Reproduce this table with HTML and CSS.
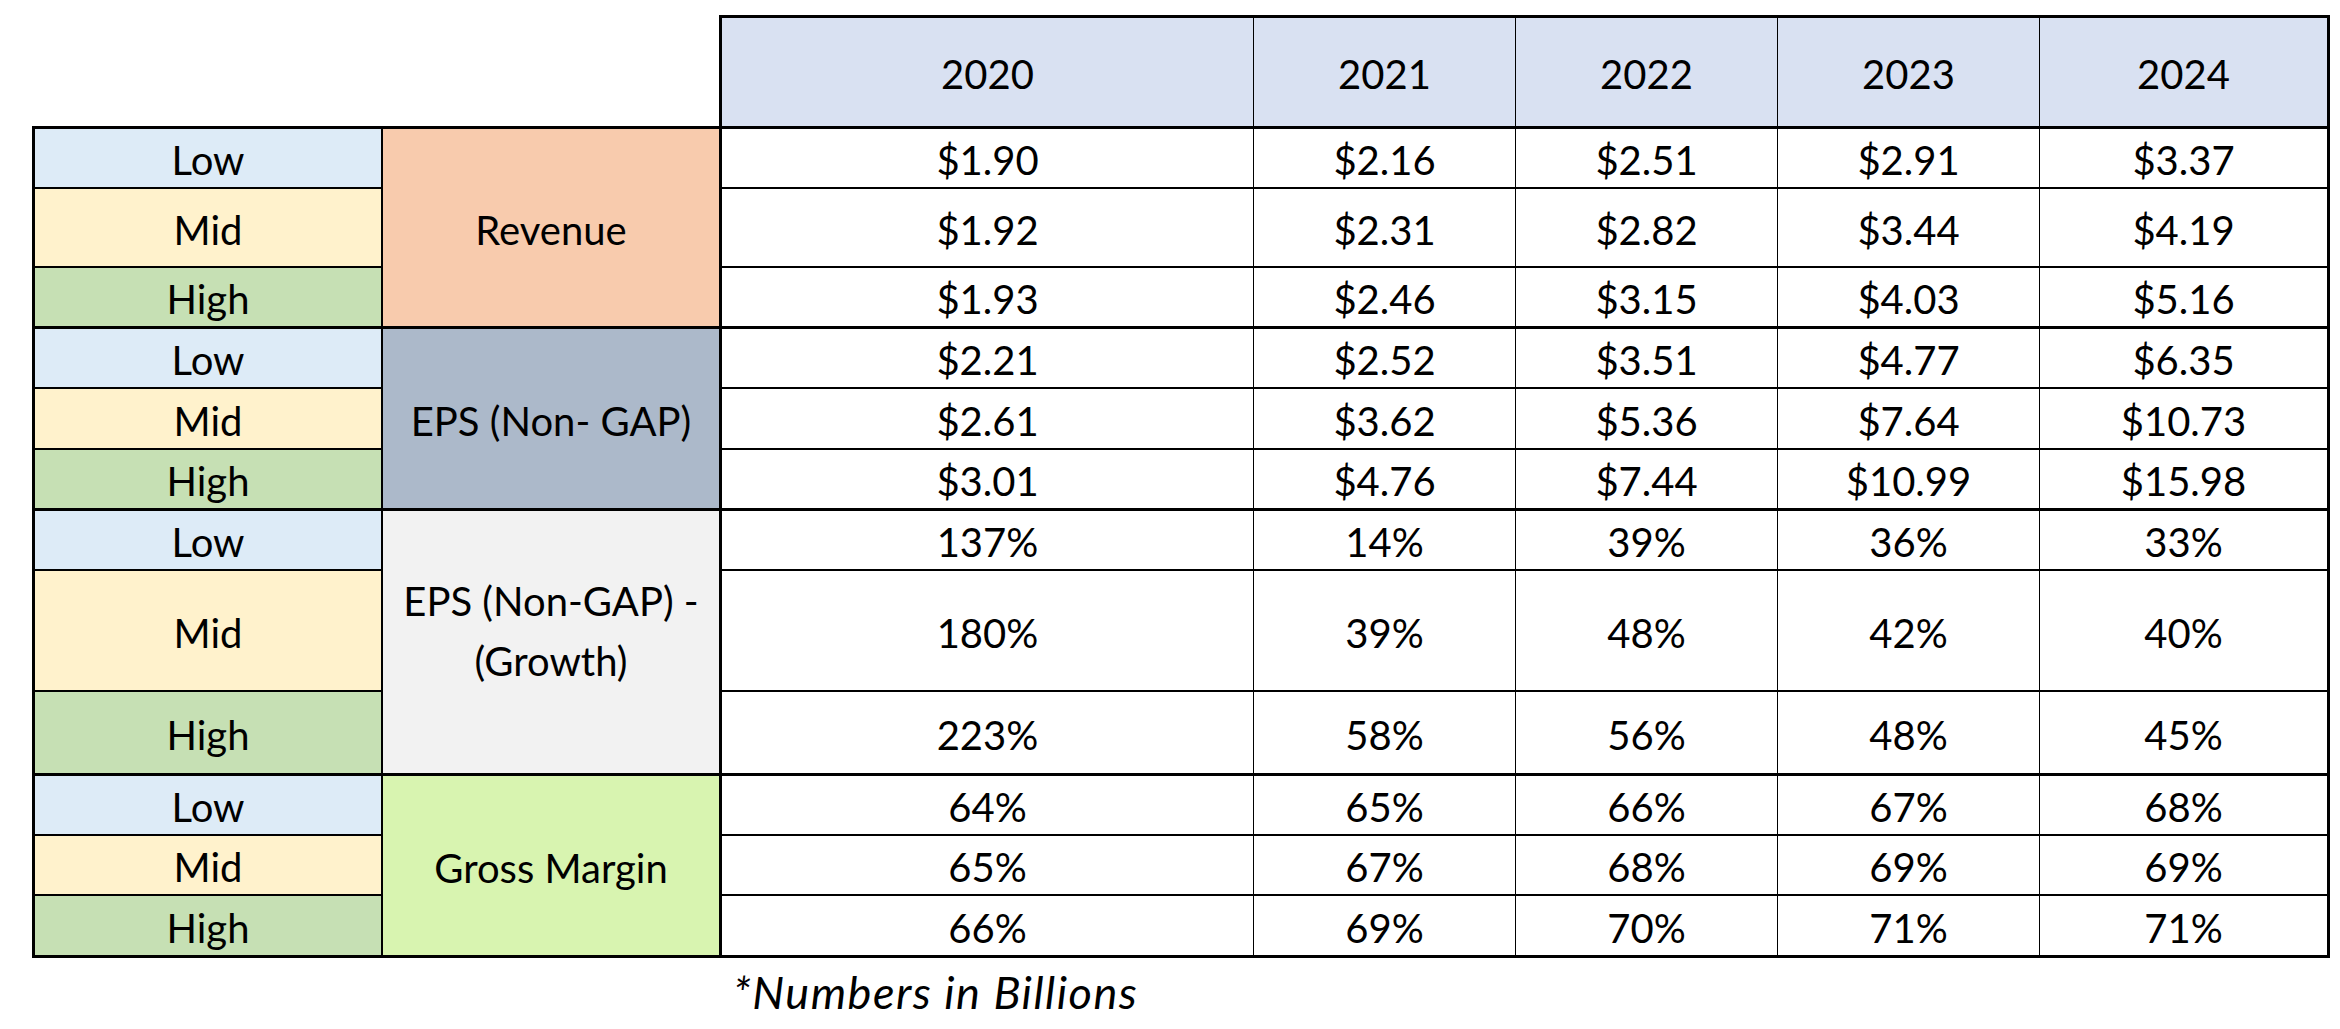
FILE: index.html
```html
<!DOCTYPE html>
<html lang="en">
<head>
<meta charset="utf-8">
<title>Projections</title>
<link rel="stylesheet" href="styles.css">
</head>
<body>
<div class="page">
  <div class="sheet">
    <div class="corner"></div>
    <div class="hd">2020</div><div class="hd">2021</div><div class="hd">2022</div><div class="hd">2023</div><div class="hd last">2024</div>

    <div class="lbl low">Low</div>
    <div class="cat rev">Revenue</div>
    <div class="v">$1.90</div><div class="v">$2.16</div><div class="v">$2.51</div><div class="v">$2.91</div><div class="v last">$3.37</div>
    <div class="lbl mid">Mid</div>
    <div class="v">$1.92</div><div class="v">$2.31</div><div class="v">$2.82</div><div class="v">$3.44</div><div class="v last">$4.19</div>
    <div class="lbl high end">High</div>
    <div class="v end">$1.93</div><div class="v end">$2.46</div><div class="v end">$3.15</div><div class="v end">$4.03</div><div class="v end last">$5.16</div>

    <div class="lbl low">Low</div>
    <div class="cat eps">EPS (Non- GAP)</div>
    <div class="v">$2.21</div><div class="v">$2.52</div><div class="v">$3.51</div><div class="v">$4.77</div><div class="v last">$6.35</div>
    <div class="lbl mid">Mid</div>
    <div class="v">$2.61</div><div class="v">$3.62</div><div class="v">$5.36</div><div class="v">$7.64</div><div class="v last">$10.73</div>
    <div class="lbl high end">High</div>
    <div class="v end">$3.01</div><div class="v end">$4.76</div><div class="v end">$7.44</div><div class="v end">$10.99</div><div class="v end last">$15.98</div>

    <div class="lbl low">Low</div>
    <div class="cat growth"><span>EPS (Non-GAP) -<br>(Growth)</span></div>
    <div class="v">137%</div><div class="v">14%</div><div class="v">39%</div><div class="v">36%</div><div class="v last">33%</div>
    <div class="lbl mid">Mid</div>
    <div class="v">180%</div><div class="v">39%</div><div class="v">48%</div><div class="v">42%</div><div class="v last">40%</div>
    <div class="lbl high end">High</div>
    <div class="v end">223%</div><div class="v end">58%</div><div class="v end">56%</div><div class="v end">48%</div><div class="v end last">45%</div>

    <div class="lbl low">Low</div>
    <div class="cat gm">Gross Margin</div>
    <div class="v">64%</div><div class="v">65%</div><div class="v">66%</div><div class="v">67%</div><div class="v last">68%</div>
    <div class="lbl mid">Mid</div>
    <div class="v">65%</div><div class="v">67%</div><div class="v">68%</div><div class="v">69%</div><div class="v last">69%</div>
    <div class="lbl high end">High</div>
    <div class="v end">66%</div><div class="v end">69%</div><div class="v end">70%</div><div class="v end">71%</div><div class="v end last">71%</div>

    <div class="note">*Numbers in Billions</div>
  </div>
</div>
</body>
</html>
```

FILE: styles.css
```css
html, body {
  margin: 0;
  padding: 0;
  background: #ffffff;
}

.page {
  padding: 15px 0 0 32px;
  font-family: Lato, "Noto Sans", "Liberation Sans", sans-serif;
  color: #000;
}

.sheet {
  display: grid;
  grid-template-columns: 351px 339px 532px 262px 262px 262px 290px;
  grid-template-rows: 114px 60px 79px 61px 60px 61px 61px 60px 121px 84px 60px 60px 62px auto;
  font-size: 40px;
}

.sheet > div {
  box-sizing: border-box;
  display: flex;
  align-items: center;
  justify-content: center;
  text-align: center;
  white-space: nowrap;
  padding-top: 4px;
}

.corner {
  grid-column: span 2;
  border-right: 3px solid #000;
  border-bottom: 3px solid #000;
}

.hd {
  background: #d9e1f2;
  border-top: 3px solid #000;
  border-bottom: 3px solid #000;
  border-right: 1px solid #000;
}

.lbl {
  border-left: 3px solid #000;
  border-right: 2px solid #000;
  border-bottom: 2px solid #000;
}

.low { background: #ddebf7; }
.mid { background: #fff2cc; }
.high { background: #c6e0b4; }

.cat {
  grid-row: span 3;
  border-right: 3px solid #000;
  border-bottom: 3px solid #000;
}

.rev { background: #f8cbad; }
.eps { background: #acb9ca; }
.sheet > .growth {
  background: #f2f2f2;
  line-height: 60px;
  padding-top: 0;
  padding-bottom: 22px;
}
.gm { background: #d8f4b0; }

.v {
  background: #fff;
  border-right: 1px solid #000;
  border-bottom: 2px solid #000;
}

.sheet > .end {
  border-bottom: 3px solid #000;
}

.sheet > .last {
  border-right: 3px solid #000;
}

.sheet > .note {
  grid-column: 3 / -1;
  justify-content: flex-start;
  align-items: flex-start;
  padding: 8px 0 0 11px;
  font-style: italic;
  font-size: 45px;
  letter-spacing: 1.5px;
  line-height: 52px;
}
```
